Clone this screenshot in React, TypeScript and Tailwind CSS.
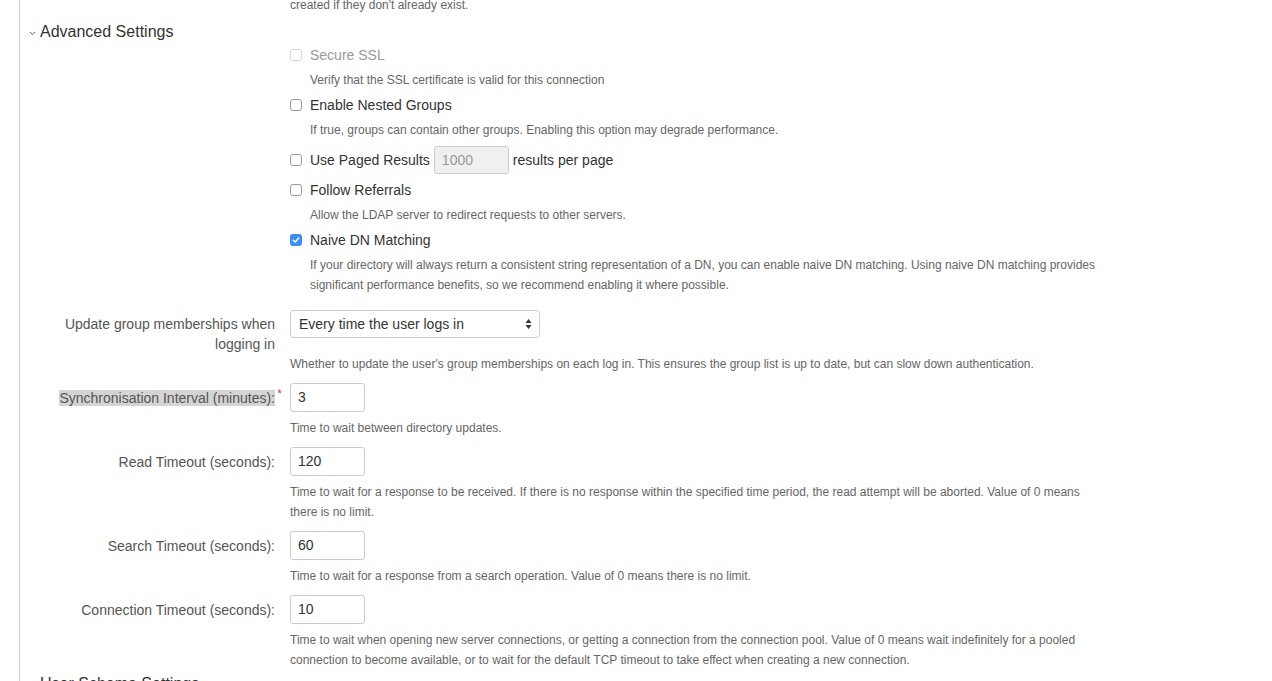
import type { ReactNode } from 'react'

const Checkbox = ({ checked = false, disabled = false }: { checked?: boolean; disabled?: boolean }) => {
  if (checked) {
    return (
      <span className="flex h-[12px] w-[12px] shrink-0 items-center justify-center rounded-[3px] bg-[#3d8ef4]">
        <svg width="8" height="8" viewBox="0 0 8 8" fill="none">
          <path d="M1.3 4.2 L3.2 6 L6.7 2" stroke="#fff" strokeWidth="1.5" strokeLinecap="round" strokeLinejoin="round" />
        </svg>
      </span>
    )
  }
  return (
    <span
      className={`h-[12px] w-[12px] shrink-0 rounded-[3px] border bg-white ${
        disabled ? 'border-[#d6d6d6]' : 'border-[#9a9a9a]'
      }`}
    />
  )
}

const CheckRow = ({
  label,
  checked,
  disabled,
}: {
  label: string
  checked?: boolean
  disabled?: boolean
}) => (
  <div className="flex h-[20px] items-center">
    <Checkbox checked={checked} disabled={disabled} />
    <span className={`ml-[8px] text-[14px] leading-[20px] ${disabled ? 'text-[#999]' : 'text-[#333]'}`}>{label}</span>
  </div>
)

const CheckDesc = ({ children }: { children: ReactNode }) => (
  <div className="mt-[5px] w-[815px] pl-[20px] text-[12px] leading-[20px] text-[#666]">{children}</div>
)

const FieldRow = ({
  label,
  value,
  required,
  highlight,
  desc,
  className = '',
}: {
  label: string
  value: string
  required?: boolean
  highlight?: boolean
  desc: string
  className?: string
}) => (
  <div className={`flex ${className}`}>
    <div className="w-[255px] pt-[5px] text-right text-[14px] leading-[20px] text-[#555]">
      <span className={`relative ${highlight ? 'bg-[#d4d4d4]' : ''}`}>
        {label}
        {required && <span className="absolute -right-[7px] -top-[6px] text-[12px] text-[#d04437]">*</span>}
      </span>
    </div>
    <div className="ml-[15px] w-[815px]">
      <div className="flex h-[29px] w-[75px] items-center rounded-[3px] border border-[#ccc] bg-white px-[7px] text-[14px] text-[#333]">
        {value}
      </div>
      <div className="mt-[6px] text-[12px] leading-[20px] text-[#666]">{desc}</div>
    </div>
  </div>
)

const SectionHeading = ({ title, className = '' }: { title: string; className?: string }) => (
  <div className={`flex h-[20px] items-center pl-[9px] ${className}`}>
    <svg width="7" height="5" viewBox="0 0 7 5" fill="none" className="mt-[2px]">
      <path d="M1 1 L3.5 3.6 L6 1" stroke="#666" strokeWidth="1" />
    </svg>
    <span className="ml-[4px] text-[16px] leading-[20px] text-[#333]">{title}</span>
  </div>
)

const App = () => {
  return (
    <div className="h-[681px] overflow-hidden bg-white font-['Liberation_Sans',Arial,sans-serif]">
      <div className="ml-[19px] min-h-[700px] border-l border-[#d0d0d0]">
        <div className="-mt-[5px] pl-[270px] text-[12px] leading-[20px] text-[#666]">
          created if they don't already exist.
        </div>

        <SectionHeading title="Advanced Settings" className="mt-[7px]" />

        <div className="mt-[3px] pl-[270px]">
          <CheckRow label="Secure SSL" disabled />
          <CheckDesc>Verify that the SSL certificate is valid for this connection</CheckDesc>

          <div className="mt-[5px]">
            <CheckRow label="Enable Nested Groups" />
          </div>
          <CheckDesc>If true, groups can contain other groups. Enabling this option may degrade performance.</CheckDesc>

          <div className="mt-[6px] flex h-[28px] items-center">
            <Checkbox />
            <span className="ml-[8px] text-[14px] text-[#333]">Use Paged Results</span>
            <span className="ml-[4px] flex h-[28px] w-[75px] items-center rounded-[3px] border border-[#ccc] bg-[#f0f0f0] px-[7px] text-[14px] text-[#999]">
              1000
            </span>
            <span className="ml-[4px] text-[14px] text-[#333]">results per page</span>
          </div>

          <div className="mt-[6px]">
            <CheckRow label="Follow Referrals" />
          </div>
          <CheckDesc>Allow the LDAP server to redirect requests to other servers.</CheckDesc>

          <div className="mt-[5px]">
            <CheckRow label="Naive DN Matching" checked />
          </div>
          <div className="mt-[5px] w-[815px] pl-[20px] text-[12px] leading-[20px] text-[#666]">
            If your directory will always return a consistent string representation of a DN, you can enable naive DN
            matching. Using naive DN matching provides significant performance benefits, so we recommend enabling it
            where possible.
          </div>
        </div>

        {/* Update group memberships */}
        <div className="mt-[15px] flex">
          <div className="w-[255px] pt-[4px] pl-[40px] text-right text-[14px] leading-[20px] text-[#555]">
            Update group memberships when logging in
          </div>
          <div className="ml-[15px] w-[815px]">
            <div className="flex h-[28px] w-[250px] items-center justify-between rounded-[4px] border border-[#ccc] bg-white pl-[8px] pr-[7px] text-[14px] text-[#333]">
              <span>Every time the user logs in</span>
              <svg width="7" height="12" viewBox="0 0 7 12">
                <path d="M3.5 1 L6.5 5 L0.5 5 Z" fill="#333" />
                <path d="M3.5 11 L6.5 7 L0.5 7 Z" fill="#333" />
              </svg>
            </div>
            <div className="mt-[16px] text-[12px] leading-[20px] text-[#666]">
              Whether to update the user's group memberships on each log in. This ensures the group list is up to date,
              but can slow down authentication.
            </div>
          </div>
        </div>

        <FieldRow
          className="mt-[9px]"
          label="Synchronisation Interval (minutes):"
          value="3"
          required
          highlight
          desc="Time to wait between directory updates."
        />
        <FieldRow
          className="mt-[9px]"
          label="Read Timeout (seconds):"
          value="120"
          desc="Time to wait for a response to be received. If there is no response within the specified time period, the read attempt will be aborted. Value of 0 means there is no limit."
        />
        <FieldRow
          className="mt-[9px]"
          label="Search Timeout (seconds):"
          value="60"
          desc="Time to wait for a response from a search operation. Value of 0 means there is no limit."
        />
        <FieldRow
          className="mt-[9px]"
          label="Connection Timeout (seconds):"
          value="10"
          desc="Time to wait when opening new server connections, or getting a connection from the connection pool. Value of 0 means wait indefinitely for a pooled connection to become available, or to wait for the default TCP timeout to take effect when creating a new connection."
        />

        <SectionHeading title="User Schema Settings" className="mt-[4px]" />
      </div>
    </div>
  )
}

export default App
